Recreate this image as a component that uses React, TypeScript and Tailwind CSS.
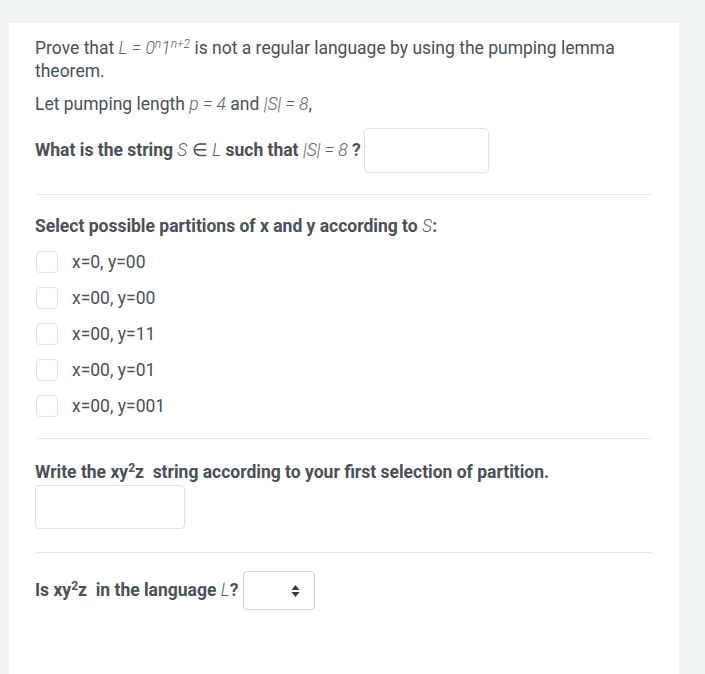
import React from 'react';

const partitions = ['x=0, y=00', 'x=00, y=00', 'x=00, y=11', 'x=00, y=01', 'x=00, y=001'];

function M({ children }: { children: React.ReactNode }) {
  // math in the question text is italic and thin
  return <span className="italic font-light text-[#5a6169]">{children}</span>;
}

export default function App() {
  return (
    <div className="min-h-screen bg-[#f0f3f4] pt-[23px] pl-[9px] pr-[26px] font-['Roboto',sans-serif] text-[17.5px] text-[#495057]">
      <div className="min-h-[651px] bg-white px-[26px] pt-[14px] pb-10">
        <p className="leading-[23px]">
          Prove that <M>L = 0<sup className="text-[12px]">n</sup>1<sup className="text-[12px]">n+2</sup></M> is not a
          regular language by using the pumping lemma theorem.
        </p>
        <p className="mt-[10px] leading-[23px]">
          Let pumping length <M>p = 4</M> and <M>|S| = 8</M>,
        </p>

        <div className="mt-[12px] flex items-center gap-[3px] font-bold">
          <span>
            What is the string <M>S</M> <span className="font-normal">∈</span> <M>L</M> such that <M>|S| = 8</M> ?
          </span>
          <input className="h-[45px] w-[125px] rounded-[4px] border border-[#dee2e6] bg-white outline-none" />
        </div>

        <hr className="mt-[21px] border-0 border-t border-[#e3e6e8]" />

        <div className="mt-[19px] font-bold leading-[24px]">
          Select possible partitions of x and y according to <M>S</M>:
        </div>
        <div className="mt-[13px] flex flex-col gap-[14px]">
          {partitions.map((p) => (
            <label key={p} className="flex items-center gap-[14px]">
              <span className="ml-[1px] h-[22px] w-[22px] rounded-[4px] border border-[#dee2e6] bg-white" />
              <span className="leading-[22px]">{p}</span>
            </label>
          ))}
        </div>

        <hr className="mt-[21px] border-0 border-t border-[#e3e6e8]" />

        <div className="mt-[21px] font-bold leading-[24px]">
          Write the xy<sup className="text-[12px]">2</sup>z&nbsp; string according to your first selection of partition.
        </div>
        <input className="mt-[1px] block h-[44px] w-[150px] rounded-[4px] border border-[#dee2e6] bg-white outline-none" />

        <hr className="mt-[23px] border-0 border-t border-[#e3e6e8]" />

        <div className="mt-[18px] flex items-center gap-[5px] font-bold">
          <span>
            Is xy<sup className="text-[12px]">2</sup>z&nbsp; in the language <M>L</M>?
          </span>
          <div className="flex h-[39px] w-[72px] items-center justify-end rounded-[4px] border border-[#ced4da] bg-white pr-[14px]">
            <svg width="9" height="14" viewBox="0 0 9 14">
              <path d="M4.5 1 L8.5 6 L0.5 6 Z" fill="#343a40" />
              <path d="M4.5 13 L8.5 8 L0.5 8 Z" fill="#343a40" />
            </svg>
          </div>
        </div>
      </div>
    </div>
  );
}
